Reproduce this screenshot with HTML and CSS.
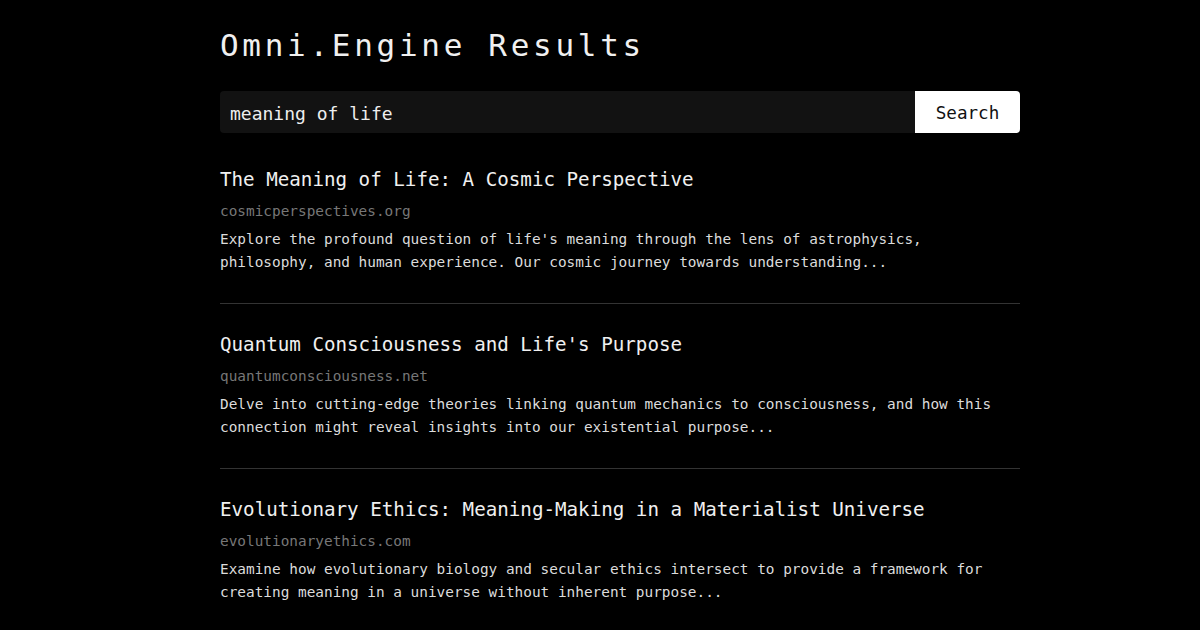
FILE: index.html
```html
<!DOCTYPE html>
<html lang="en">
<head>
<meta charset="utf-8">
<title>Omni.Engine Results</title>
<link rel="stylesheet" href="styles.css">
</head>
<body>
<div class="container">
  <h1 class="brand">Omni.Engine Results</h1>
  <form class="search">
    <input class="search-input" type="text" value="meaning of life">
    <button class="search-btn" type="button">Search</button>
  </form>
  <div class="results">
    <div class="result">
      <h2 class="result-title">The Meaning of Life: A Cosmic Perspective</h2>
      <div class="result-url">cosmicperspectives.org</div>
      <p class="result-desc">Explore the profound question of life's meaning through the lens of astrophysics, philosophy, and human experience. Our cosmic journey towards understanding...</p>
    </div>
    <div class="result">
      <h2 class="result-title">Quantum Consciousness and Life's Purpose</h2>
      <div class="result-url">quantumconsciousness.net</div>
      <p class="result-desc">Delve into cutting-edge theories linking quantum mechanics to consciousness, and how this connection might reveal insights into our existential purpose...</p>
    </div>
    <div class="result">
      <h2 class="result-title">Evolutionary Ethics: Meaning-Making in a Materialist Universe</h2>
      <div class="result-url">evolutionaryethics.com</div>
      <p class="result-desc">Examine how evolutionary biology and secular ethics intersect to provide a framework for creating meaning in a universe without inherent purpose...</p>
    </div>
  </div>
</div>
</body>
</html>
```

FILE: styles.css
```css
html, body {
  margin: 0;
  padding: 0;
  background: #000;
  color: #e8e8e8;
  font-family: "DejaVu Sans Mono", "Liberation Mono", monospace;
}
body {
  padding-left: 40px;
}
.container {
  width: 800px;
  margin: 0 auto;
  padding-top: 26px;
}
.brand {
  margin: 0;
  font-size: 31px;
  line-height: 38px;
  font-weight: 300;
  letter-spacing: 3.7px;
  color: #f0f0f0;
}
.search {
  display: flex;
  margin: 27px 0 0;
  height: 42px;
}
.search-input {
  flex: 1;
  min-width: 0;
  height: 42px;
  box-sizing: border-box;
  border: none;
  outline: none;
  background: #121212;
  color: #eeeeee;
  font-family: inherit;
  font-size: 18px;
  padding: 2px 10px 0;
  border-radius: 4px 0 0 4px;
}
.search-btn {
  width: 105px;
  height: 42px;
  border: none;
  background: #ffffff;
  color: #111;
  font-family: inherit;
  font-size: 17.6px;
  padding: 2px 0 0;
  border-radius: 0 4px 4px 0;
}
.results {
  margin-top: 35px;
}
.result {
  padding-bottom: 29px;
  border-bottom: 1px solid #333;
  margin-bottom: 29px;
}
.result-title {
  margin: 0;
  font-size: 19.2px;
  line-height: 23px;
  font-weight: 400;
  color: #f0f0f0;
}
.result-url {
  margin-top: 9px;
  font-size: 14.4px;
  line-height: 23px;
  color: #777;
}
.result-desc {
  margin: 5px 0 0;
  font-size: 14.4px;
  line-height: 23px;
  color: #dcdcdc;
}
```
